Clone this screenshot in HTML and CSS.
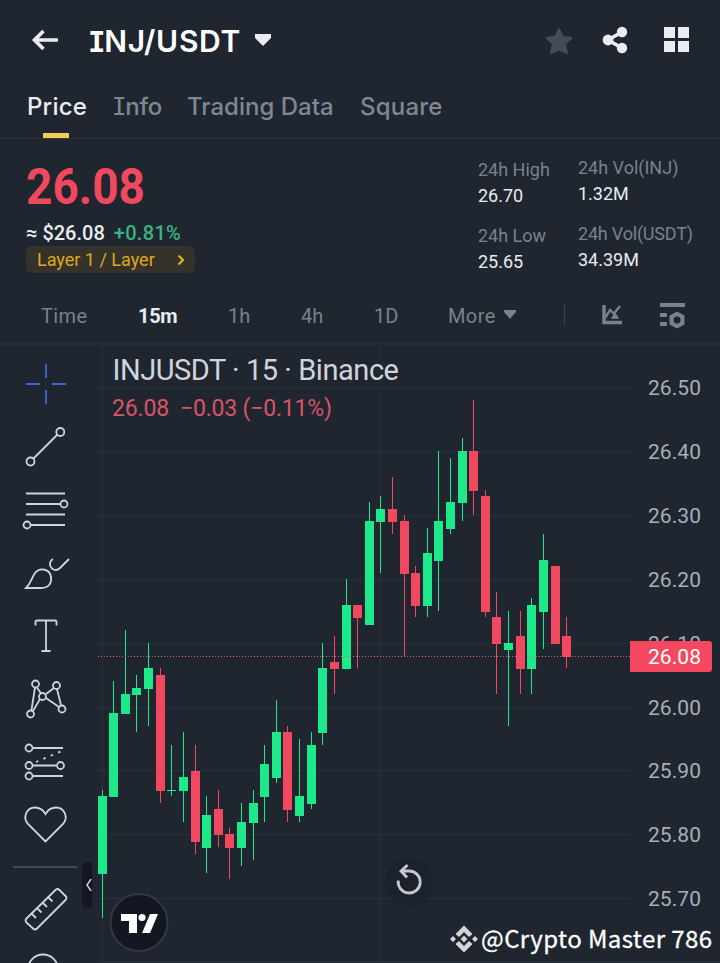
FILE: index.html
```html
<!DOCTYPE html>
<html lang="en">
<head>
<meta charset="utf-8">
<title>INJ/USDT</title>
<link rel="stylesheet" href="styles.css">
</head>
<body>
<header class="topbar">
  <svg class="back" width="28" height="22" viewBox="0 0 28 22"><path d="M27 11H3M12.500 2 3.500 11l9 9"/></svg>
  <h1 class="pair"><span class="slab">I</span>NJ/USDT</h1>
  <svg class="caret" width="18" height="14" viewBox="0 0 18 14"><path d="M1 1h16v4l-8 8-8-8z"/></svg>
  <svg class="star" width="28" height="28" viewBox="0 0 28 28"><path stroke-linejoin="round" stroke-width="2" d="M14 2l3.700 7.800 8.500 1.200-6.200 6 2 9.200-8-3.700-8 3.700 2-9.200-6.200-6 8.500-1.200z"/></svg>
  <svg class="share" width="28" height="28" viewBox="0 0 28 28"><path d="M21 6 7 14l14 8" fill="none" stroke="#eaecef" stroke-width="3.600"/><circle cx="21" cy="6" r="5.200"/><circle cx="7" cy="14" r="5.400"/><circle cx="21" cy="22" r="5.200"/></svg>
  <svg class="tiles" width="25" height="25" viewBox="0 0 25 25"><path d="M0 0h11v11H0zM14 0h11v11H14zM0 14h11v11H0zM14 14h11v11H14z"/></svg>
</header>
<nav class="tabs">
  <a class="tab tab-price active">Price</a>
  <a class="tab tab-info"><span class="slab">I</span>nfo</a>
  <a class="tab tab-data">Trading Data</a>
  <a class="tab tab-square">Square</a>
</nav>
<section class="summary">
  <div class="quote">
    <div class="last">26.08</div>
    <div class="sub"><span class="fiat">≈ $26.08</span><span class="change">+0.81%</span></div>
    <div class="tag"><span>Layer 1 / Layer</span><svg width="8" height="12" viewBox="0 0 8 12"><path d="M1.500 1.500 6 6l-4.500 4.500"/></svg></div>
  </div>
  <dl class="stats">
    <div><dt>24h High</dt><dd>26.70</dd></div>
    <div><dt>24h Low</dt><dd>25.65</dd></div>
  </dl>
  <dl class="stats volumes">
    <div><dt>24h Vol(INJ)</dt><dd>1.32M</dd></div>
    <div><dt class="usdt">24h Vol(USDT)</dt><dd>34.39M</dd></div>
  </dl>
</section>
<nav class="intervals">
  <span class="i-time">Time</span>
  <span class="i-15m on">15m</span>
  <span class="i-1h">1h</span>
  <span class="i-4h">4h</span>
  <span class="i-1d">1D</span>
  <span class="i-more">More</span>
  <svg class="more-caret" width="12" height="9" viewBox="0 0 12 9"><path d="M0 0h12v2L6 9 0 2z"/></svg>
  <i class="sep"></i>
  <svg class="indicator" width="20" height="22" viewBox="0 0 20 22"><path d="M2 1v17.500h18" stroke-width="3.400"/><path d="M3 14 8 6l4 3.500L18 2M11 13.500l2-3 2 3z" stroke-width="2.400"/></svg>
  <svg class="settings" width="25" height="26" viewBox="0 0 25 26"><path d="M0 0h25v4H0zM0 10h7v4H0zM0 19h7v4H0z"/><path fill-rule="evenodd" d="M17 8.500 24.500 12.500v9L17 25.500 9.500 21.500v-9zM17 13.500a3.500 3.500 0 1 0 0 7 3.500 3.500 0 0 0 0-7z"/></svg>
</nav>
<main class="chart">
  <aside class="tools">
    <svg class="tool cross" viewBox="0 0 48 48"><path d="M24 4v14M24 30v14M4 24h14M30 24h14"/></svg>
    <svg class="tool" viewBox="0 0 48 48"><circle cx="8.500" cy="38.500" r="4"/><circle cx="38.300" cy="9" r="4"/><path d="m11.500 35.500 24-24"/></svg>
    <svg class="tool" viewBox="0 0 48 48"><path d="M4 7.500h39M4 18h34M4 28.500h39M9 39h34"/><circle cx="42" cy="18" r="3.500"/><circle cx="5" cy="39" r="3.500"/></svg>
    <svg class="tool" viewBox="0 0 48 48"><path d="M4 39h15c8 0 11-5 10-11-1-8-11-10-16-4-3 4-4 10-9 15zM31 10c-6 4-2 11 3 11 2 0 3-1 4-2l9-9"/></svg>
    <svg class="tool" viewBox="0 0 48 48"><path d="M13.500 13.500V10q0-1.500 1.500-1.500h18q1.500 0 1.500 1.500v3.500M24 9v29.500M19.500 39h9"/></svg>
    <svg class="tool" viewBox="0 0 48 48"><path d="M13 12.500 9.500 35M15 12.500l4 6M24 19l8-6M35 14l4 16M18 24l-7 12M24 23l13 9"/><circle cx="13.500" cy="9" r="3.500"/><circle cx="34.500" cy="10.500" r="3.500"/><circle cx="20.500" cy="21.500" r="3.500"/><circle cx="8.500" cy="39" r="3.500"/><circle cx="40" cy="34" r="3.500"/></svg>
    <svg class="tool" viewBox="0 0 48 48"><path d="M11 10h30M11 27.500h23M11 38h30"/><path d="m14 24 26-11" stroke-dasharray="2.500 5.500"/><circle cx="7" cy="10" r="3.500"/><circle cx="7" cy="27.500" r="3.500"/><circle cx="38.500" cy="27.500" r="3.500"/><circle cx="7" cy="38" r="3.500"/></svg>
    <svg class="tool" viewBox="0 0 48 48"><path d="M23.500 40.500 6 23C0 16 5 6.500 13 6.500c5 0 8 2 10.500 6.500C26 8.500 29 6.500 34 6.500c8 0 13 9.500 7 16.500z"/></svg>
    <hr>
    <svg class="tool ruler" viewBox="0 0 48 48"><path d="M4.500 35.500 33.500 7q2-2 4 0l6 6q2 2 0 4L15 45.500q-2 2-4 0l-6.500-6q-2-2 0-4zM10 31l4 4M15.500 25.500l4 4M21 20l4 4M26.500 14.500l4 4" transform="translate(0 -1)"/></svg>
    <svg class="tool lens" viewBox="0 0 48 48"><circle cx="21" cy="22.500" r="15"/></svg>
  </aside>
  <svg class="plot" width="623" height="621" viewBox="97 342 623 621">
    <g id="grid"></g>
    <text class="symbol" x="112.500" y="380" textLength="286.500">INJUSDT · 15 · Binance</text>
    <text class="ohlc" x="112" y="416" textLength="220" xml:space="preserve">26.08  −0.03 (−0.11%)</text>
    <g id="candles"></g>
    <path class="last-line" d="M98 656.500H630"/>
    <g id="labels"></g>
    <path class="price-box" d="M630 641h79q3 0 3 3v25q0 3-3 3h-79z"/>
    <text class="price-text" x="648" y="664" textLength="53">26.08</text>
    <g class="tv"><circle cx="139" cy="922.500" r="28.500"/><path d="M121 914h16v19h-8v-12h-8zM150 914h8l-8 19h-8z"/><circle class="dot" cx="142" cy="917.500" r="3.600"/></g>
    <g class="reset"><circle cx="409" cy="882" r="24"/><path d="M398.300 880.500a11 11 0 1 0 11-9.500h-8M407.500 865l-6.500 6 6 6.500"/></g>
    <g class="mark" transform="translate(464 939)"><path d="m-8.500-5 8.500-8.500L8.500-5 5-2 0-7l-5 5zM-8.500 5 0 13.500 8.500 5 5 2 0 7l-5-5zM-14 0l3-3 3 3-3 3zM8 0l3-3 3 3-3 3zM-3.500 0 0-3.500 3.500 0 0 3.500z"/></g>
    <text class="credit" x="481" y="948" textLength="231">@Crypto Master 786</text>
  </svg>
  <button class="collapse"><svg width="6" height="12" viewBox="0 0 6 12"><path d="M5 0 1 6l4 6"/></svg></button>
</main>
<script src="chart.js"></script>
</body>
</html>
```
FILE: styles.css
```css
* { box-sizing: border-box; margin: 0; padding: 0; }
body {
  width: 720px; height: 963px; overflow: hidden;
  background: #1f262f; color: #eaecef;
  font-family: Inter, Roboto, sans-serif;
}
svg { display: block; flex: none; }
.slab { font-family: "DejaVu Sans Mono", monospace; }
.topbar { display: flex; align-items: center; height: 80px; padding-left: 31px; }
.back { fill: none; stroke: #eaecef; stroke-width: 3.600; }
.pair {
  width: 151px; margin-left: 31px; padding-top: 2px; white-space: nowrap;
  font-size: 30px; font-weight: 600; line-height: 36px; letter-spacing: .7px; color: #fff;
}
.pair .slab { margin: 0 -2px 0 -2px; font-size: 29px; font-weight: 700; }
.caret { margin-left: 13px; fill: #eaecef; }
.star { margin: 1px 0 0 273px; fill: #434c5a; stroke: #434c5a; }
.share { margin: -1px 0 0 28px; fill: #eaecef; }
.tiles { margin: -1px 0 0 35px; fill: #eaecef; }
.tabs { display: flex; height: 59px; padding: 10px 0 0 27px; border-bottom: 1px solid #2e3640; }
.tab {
  position: relative; height: 48px; padding-top: 1px; white-space: nowrap;
  font-size: 24px; font-weight: 500; line-height: 32px; color: #808794;
}
.tab-info { width: 74px; letter-spacing: -.2px; }
.tab-info .slab { margin: 0 -1px 0 -1px; }
.tab-data { width: 173px; }
.tab-square { letter-spacing: .2px; }
.tab-price.active { color: #eaecef; width: 59px; margin-right: 27px; letter-spacing: .2px; }
.active::after { content: ""; position: absolute; left: 16px; bottom: 0; width: 26px; height: 5px; background: #f0cf50; }
.summary { display: flex; height: 151px; }
.quote { width: 478px; padding: 20px 0 0 26px; font-family: Roboto, sans-serif; }
.last {
  width: 130px; height: 56px; font-size: 50px; font-weight: 700; line-height: 56px; color: #f0495f;
  transform: scaleX(.92); transform-origin: left;
}
.sub { display: flex; gap: 9px; height: 31px; line-height: 36px; font-size: 20px; }
.fiat { font-weight: 500; }
.change { color: #38b582; font-weight: 500; letter-spacing: .3px; }
.tag {
  display: flex; align-items: center; justify-content: space-between;
  width: 169px; height: 27px; padding: 0 10px 0 11px; border-radius: 6px;
  background: #35322b; color: #dda91c; font-size: 18px;
}
.tag svg { fill: none; stroke: #e4ae1b; stroke-width: 2.200; }
.stats { width: 100px; padding-top: 18px; white-space: nowrap; font-family: Roboto, sans-serif; }
.stats div { height: 66px; }
.stats dt { height: 25px; line-height: 25px; font-size: 18px; color: #79818d; }
.stats dt.usdt { letter-spacing: -.2px; }
.stats dd { line-height: 27px; font-size: 18px; }
.volumes { width: 142px; padding-top: 16px; }
.intervals { display: flex; align-items: center; height: 52px; padding-left: 41px; font-family: Roboto, sans-serif; font-size: 20px; color: #79818d; }
.i-time { width: 97px; letter-spacing: .4px; }
.i-15m { width: 90px; letter-spacing: -.3px; }
.on { color: #eaecef; font-weight: 700; }
.i-1h { width: 73px; }
.i-4h { width: 73px; }
.i-1d { width: 74px; }
.i-more { width: 56px; letter-spacing: .4px; }
.more-caret { margin-top: -3px; fill: #79818d; }
.sep { width: 1px; height: 21px; margin: -3px 36px 0 48px; background: #3b434e; }
.indicator { margin: -2px 0 0 1px; fill: none; stroke: #79818d; }
.settings { margin: -1px 0 0 38px; fill: #79818d; }
.chart { position: relative; display: flex; height: 621px; border-top: 3px solid #262d37; }
.tools { display: flex; flex-direction: column; width: 97px; padding: 15px 0 0 22px; }
.tool { width: 48px; height: 48px; margin-bottom: 15px; fill: none; stroke: #cfd3dc; stroke-width: 1.800; }
.cross { stroke: #3e66d5; }
.tools hr { flex: none; width: 64px; height: 2px; border: 0; margin: 2px 0 16px -9px; background: #434a55; }
.plot { margin-top: -3px; font-family: Roboto, sans-serif; }
.grid { stroke: #29303a; }
.up { fill: #1de98b; }
.down { fill: #f0495f; }
.last-line { stroke: #d76073; stroke-dasharray: 1 2; }
.symbol { font-size: 29px; fill: #d1d4dc; }
.ohlc { font-size: 23px; fill: #d85469; }
.axis { font-size: 21px; fill: #a9aeb9; }
.price-box { fill: #f3485f; }
.price-text { font-size: 21px; fill: #fff; }
.tv { fill: #fff; }
.tv circle { fill: #131722; stroke: #343943; stroke-width: 2; }
.tv .dot { fill: #fff; stroke: none; }
.reset circle { fill: #1c222b; }
.reset path { fill: none; stroke: #c5c8d0; stroke-width: 2.800; }
.mark { fill: #d5d5d5; }
.credit { font: 400 24px "Noto Sans CJK SC", sans-serif; fill: #fff; stroke: #fff; stroke-width: .3; }
.collapse {
  position: absolute; left: 82px; top: 517px; width: 10px; height: 46px;
  display: flex; align-items: center; justify-content: center;
  border: 0; border-radius: 6px 0 0 6px; background: #131722;
}
.collapse svg { margin-left: 3px; }
.collapse path { fill: none; stroke: #cfd3dc; stroke-width: 1.500; }
```
FILE: chart.js
```js
// Each candle: direction, centre x, wick top, body top, body bottom, wick bottom.
const candles = [
  ["up",102,790,796,874,918],["up",113,681,713,797,797],["up",125,630,694,714,714],
  ["up",136,675,688,695,732],["up",148,643,668,689,726],["down",160,668,675,791,803],
  ["up",171,745,790,791,796],["up",183,732,777,791,822],["down",195,745,771,842,854],
  ["up",206,796,815,848,873],["down",218,790,809,835,847],["down",229,828,834,848,879],
  ["up",241,803,822,848,866],["up",253,790,803,823,860],["up",264,745,764,797,822],
  ["up",276,700,732,778,783],["down",287,726,732,810,822],["up",299,739,796,816,822],
  ["up",311,732,745,804,809],["up",322,643,668,733,745],["down",334,636,662,669,694],
  ["up",346,579,605,669,669],["down",357,605,605,618,668],["up",369,502,521,625,625],
  ["up",380,496,509,522,573],["down",392,477,509,522,534],["down",404,515,521,574,656],
  ["down",415,566,573,606,617],["up",427,528,553,606,617],["up",438,451,521,561,611],
  ["up",450,458,502,529,534],["up",462,438,451,503,521],["down",473,400,451,491,515],
  ["down",485,490,496,612,617],["down",496,592,617,644,694],["up",508,611,643,650,726],
  ["down",520,611,636,669,694],["up",531,598,605,669,694],["up",543,534,560,612,649],
  ["down",555,566,566,644,644],["down",566,617,636,657,668]
];
document.getElementById("candles").innerHTML = candles.map(([dir, x, hi, top, bottom, lo]) =>
  `<path class="${dir}" d="M${x} ${hi}h1V${lo}h-1zM${x - 4} ${top}h9V${bottom}h-9z"/>`).join("");

const prices = ["26.50","26.40","26.30","26.20","26.10","26.00","25.90","25.80","25.70"];
const rows = [387.5, 451.5, 515.5, 579.5, 643.5, 707.5, 770.5, 834.5, 898.5];
document.getElementById("grid").innerHTML =
  rows.map(y => `<path class="grid" d="M97 ${y}H631"/>`).join("") +
  '<path class="grid" d="M102.5 344V961M380.5 344V357M380.5 392V961M97 961.5H720"/>';
document.getElementById("labels").innerHTML =
  rows.map((y, i) => `<text class="axis" x="648" y="${y + 7.5}" textLength="53">${prices[i]}</text>`).join("");
```
